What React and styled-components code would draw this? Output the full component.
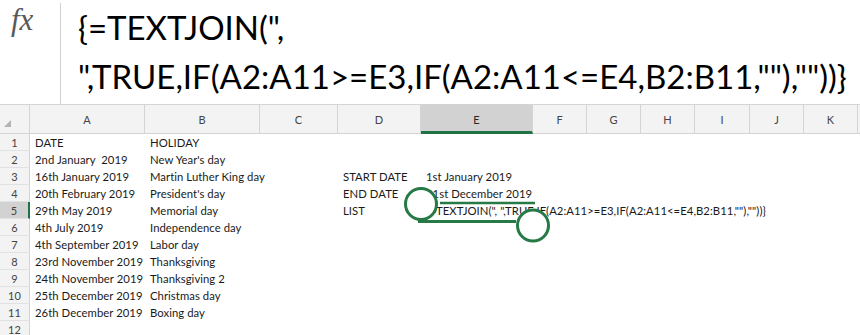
import React from 'react';
import styled, { createGlobalStyle } from 'styled-components';

const COLUMNS = [
  { name: 'A', width: 115 },
  { name: 'B', width: 115 },
  { name: 'C', width: 78 },
  { name: 'D', width: 83 },
  { name: 'E', width: 112 },
  { name: 'F', width: 54 },
  { name: 'G', width: 54 },
  { name: 'H', width: 54 },
  { name: 'I', width: 55 },
  { name: 'J', width: 54 },
  { name: 'K', width: 54 },
];

const SELECTED_COL = 'E';
const SELECTED_ROW = 5;

const FORMULA = '{=TEXTJOIN(", ",TRUE,IF(A2:A11>=E3,IF(A2:A11<=E4,B2:B11,""),""))}';

const CELLS = {
  1: { A: 'DATE', B: 'HOLIDAY' },
  2: { A: '2nd January  2019', B: "New Year's day" },
  3: { A: '16th January 2019', B: 'Martin Luther King day', D: 'START DATE', E: '1st January 2019' },
  4: { A: '20th February 2019', B: "President's day", D: 'END DATE', E: '31st December 2019' },
  5: { A: '29th May 2019', B: 'Memorial day', D: 'LIST', E: FORMULA },
  6: { A: '4th July 2019', B: 'Independence day' },
  7: { A: '4th September 2019', B: 'Labor day' },
  8: { A: '23rd November 2019', B: 'Thanksgiving' },
  9: { A: '24th November 2019', B: 'Thanksgiving 2' },
  10: { A: '25th December 2019', B: 'Christmas day' },
  11: { A: '26th December 2019', B: 'Boxing day' },
  12: {},
};

const GlobalStyle = createGlobalStyle`
  html, body {
    margin: 0;
    padding: 0;
    background: #ffffff;
  }
  body {
    width: 860px;
    height: 335px;
    overflow: hidden;
  }
`;

const App = () => {
  const template = `30px ${COLUMNS.map((c) => `${c.width}px`).join(' ')} 1fr`;
  return (
    <>
      <GlobalStyle />
      <Page>
        <FormulaBar>
          <FxBox>
            <Fx>fx</Fx>
          </FxBox>
          <FormulaText>
            <FormulaLine>{'{=TEXTJOIN(",'}</FormulaLine>
            <FormulaLine>{'",TRUE,IF(A2:A11>=E3,IF(A2:A11<=E4,B2:B11,""),""))}'}</FormulaLine>
          </FormulaText>
        </FormulaBar>

        <Sheet style={{ gridTemplateColumns: template }}>
          <Corner>
            <CornerTriangle />
          </Corner>
          {COLUMNS.map((c) => (
            <ColHeader key={c.name} selected={c.name === SELECTED_COL}>
              {c.name}
            </ColHeader>
          ))}
          <ColHeader />

          {Object.keys(CELLS).map((row) => {
            const n = Number(row);
            return (
              <React.Fragment key={row}>
                <RowHeader selected={n === SELECTED_ROW}>{n}</RowHeader>
                {COLUMNS.map((c) => (
                  <Cell key={c.name}>{CELLS[row][c.name] || ''}</Cell>
                ))}
                <Cell />
              </React.Fragment>
            );
          })}
        </Sheet>

        {/* hand-drawn markup laid over the sheet */}
        <Annotations width="860" height="335" viewBox="0 0 860 335">
          <line x1="440" y1="203" x2="535" y2="203" stroke="#267a45" strokeWidth="2.5" />
          <line x1="418" y1="221.5" x2="516" y2="221.5" stroke="#267a45" strokeWidth="3" />
          <circle cx="421" cy="204" r="15.5" fill="#ffffff" stroke="#267a45" strokeWidth="3" />
          <circle cx="533" cy="225.5" r="15.5" fill="#ffffff" stroke="#267a45" strokeWidth="3" />
        </Annotations>
      </Page>
    </>
  );
};

const Page = styled.div`
  position: relative;
  width: 860px;
  height: 335px;
  overflow: hidden;
  background: #ffffff;
`;

const FormulaBar = styled.div`
  display: flex;
  height: 105px;
  border-bottom: 1px solid #d4d4d4;
  box-sizing: border-box;
`;

const FxBox = styled.div`
  width: 61px;
  flex: none;
  margin-top: 3px;
  border-right: 1px solid #d0d0d0;
  box-sizing: border-box;
  padding-left: 11px;
`;

const Fx = styled.span`
  font-family: 'Liberation Serif', 'DejaVu Serif', serif;
  font-style: italic;
  font-size: 31px;
  line-height: 34px;
  color: #595959;
`;

const FormulaText = styled.div`
  padding: 3px 0 0 17px;
  font-family: Lato, 'Open Sans', sans-serif;
  font-size: 33px;
  line-height: 49px;
  color: #000000;
  white-space: nowrap;
`;

const FormulaLine = styled.div``;

const Sheet = styled.div`
  display: grid;
  grid-template-rows: 29px repeat(12, 17px);
  font-family: Lato, 'Open Sans', sans-serif;
`;

const Corner = styled.div`
  display: flex;
  align-items: flex-end;
  padding: 0 0 6px 4px;
  background: #f3f3f3;
  border-right: 1px solid #d4d4d4;
  border-bottom: 1px solid #d4d4d4;
  box-sizing: border-box;
`;

const CornerTriangle = styled.div`
  width: 0;
  height: 0;
  border-left: 7px solid transparent;
  border-bottom: 7px solid #b3b3b3;
`;

const ColHeader = styled.div`
  display: flex;
  align-items: center;
  justify-content: center;
  background: ${({ selected }) => (selected ? '#d2d2d2' : '#f3f3f3')};
  color: ${({ selected }) => (selected ? '#262626' : '#444444')};
  border-right: 1px solid #d4d4d4;
  border-bottom: ${({ selected }) => (selected ? '3px solid #217346' : '1px solid #d4d4d4')};
  box-sizing: border-box;
  padding-top: ${({ selected }) => (selected ? '2px' : '0')};
  font-size: 11px;
`;

const RowHeader = styled.div`
  display: flex;
  align-items: center;
  justify-content: center;
  background: ${({ selected }) => (selected ? '#d2d2d2' : '#f3f3f3')};
  color: #444444;
  border-right: ${({ selected }) => (selected ? '2px solid #217346' : '1px solid #d4d4d4')};
  border-bottom: 1px solid #e1e1e1;
  box-sizing: border-box;
  font-size: 11px;
`;

const Cell = styled.div`
  display: flex;
  align-items: center;
  padding-left: 5px;
  font-size: 11.3px;
  letter-spacing: 0.05px;
  color: #1a1a1a;
  white-space: pre;
  overflow: visible;
  min-width: 0;
`;

const Annotations = styled.svg`
  position: absolute;
  left: 0;
  top: 0;
  pointer-events: none;
`;

export default App;
